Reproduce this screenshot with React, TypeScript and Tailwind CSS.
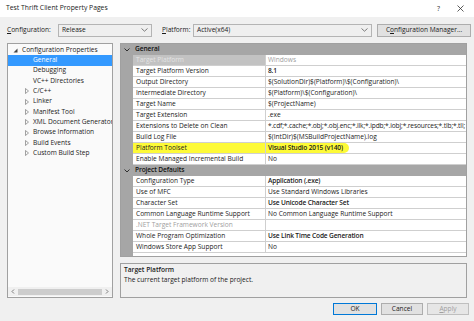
import React from "react";

type Row = {
  name: string;
  value?: string;
  bold?: boolean;
  disabled?: boolean;
  greyName?: boolean;
  highlight?: boolean;
  tight?: boolean;
};

type Section = { title: string; rows: Row[] };

const sections: Section[] = [
  {
    title: "General",
    rows: [
      { name: "Target Platform", value: "Windows", disabled: true, greyName: true },
      { name: "Target Platform Version", value: "8.1", bold: true },
      { name: "Output Directory", value: "$(SolutionDir)$(Platform)\\$(Configuration)\\" },
      { name: "Intermediate Directory", value: "$(Platform)\\$(Configuration)\\" },
      { name: "Target Name", value: "$(ProjectName)" },
      { name: "Target Extension", value: ".exe" },
      {
        name: "Extensions to Delete on Clean",
        value: "*.cdf;*.cache;*.obj;*.obj.enc;*.ilk;*.ipdb;*.iobj;*.resources;*.tlb;*.tli;",
        tight: true,
      },
      { name: "Build Log File", value: "$(IntDir)$(MSBuildProjectName).log" },
      { name: "Platform Toolset", value: "Visual Studio 2015 (v140)", bold: true, highlight: true },
      { name: "Enable Managed Incremental Build", value: "No" },
    ],
  },
  {
    title: "Project Defaults",
    rows: [
      { name: "Configuration Type", value: "Application (.exe)", bold: true },
      { name: "Use of MFC", value: "Use Standard Windows Libraries" },
      { name: "Character Set", value: "Use Unicode Character Set", bold: true },
      { name: "Common Language Runtime Support", value: "No Common Language Runtime Support" },
      { name: ".NET Target Framework Version", value: "", disabled: true },
      { name: "Whole Program Optimization", value: "Use Link Time Code Generation", bold: true },
      { name: "Windows Store App Support", value: "No" },
    ],
  },
];

const tree = [
  { label: "General", selected: true },
  { label: "Debugging" },
  { label: "VC++ Directories" },
  { label: "C/C++", collapsed: true },
  { label: "Linker", collapsed: true },
  { label: "Manifest Tool", collapsed: true },
  { label: "XML Document Generator", collapsed: true },
  { label: "Browse Information", collapsed: true },
  { label: "Build Events", collapsed: true },
  { label: "Custom Build Step", collapsed: true },
];

function Chevron() {
  return (
    <svg width="7" height="4" viewBox="0 0 7 4" className="shrink-0">
      <path d="M0.5 0.5 L3.5 3.2 L6.5 0.5" fill="none" stroke="#6d6d6d" strokeWidth="0.9" />
    </svg>
  );
}

function Combo({ text, className }: { text: string; className: string }) {
  return (
    <div className={`h-[13px] border border-[#b4b4b4] bg-[#efefef] flex items-center pl-[3px] pr-[3px] ${className}`}>
      <span className="flex-1">{text}</span>
      <Chevron />
    </div>
  );
}

export default function App() {
  return (
    <div className="w-[474px] h-[321px] bg-[#f0f0f0] flex flex-col overflow-hidden text-[6.6px] leading-none text-[#1a1a1a] font-['Open_Sans',sans-serif]">
      {/* title bar */}
      <div className="h-[17px] bg-white flex items-center pl-[6px] shrink-0">
        <span className="text-[6.8px]">Test Thrift Client Property Pages</span>
        <span className="ml-auto mr-[17px] text-[7px] text-[#333]">?</span>
        <svg width="7" height="7" viewBox="0 0 7 7" className="mr-[10px]">
          <path d="M0.5 0.5 L6.5 6.5 M6.5 0.5 L0.5 6.5" stroke="#333" strokeWidth="0.8" />
        </svg>
      </div>

      {/* config bar */}
      <div className="h-[26px] flex items-center pl-[7px] shrink-0">
        <span className="w-[51px]">
          <span className="underline">C</span>onfiguration:
        </span>
        <Combo text="Release" className="w-[94px]" />
        <span className="ml-[10px] w-[31px]">
          <span className="underline">P</span>latform:
        </span>
        <Combo text="Active(x64)" className="w-[179px]" />
        <div className="ml-[5px] w-[94px] h-[13px] border border-[#adadad] bg-[#e1e1e1] flex items-center justify-center">
          C<span className="underline">o</span>nfiguration Manager...
        </div>
      </div>

      {/* main area */}
      <div className="h-[255px] flex gap-[7px] px-[7px] shrink-0">
        {/* tree */}
        <div className="w-[106px] border border-[#a0a0a0] bg-[#fafafa] flex flex-col">
          <div className="flex-1 pt-[1px]">
            <div className="h-[10.3px] flex items-center pl-[5px]">
              <svg width="5" height="5" viewBox="0 0 5 5" className="mr-[4px]">
                <path d="M4.5 0.5 L4.5 4.5 L0.5 4.5 Z" fill="#444" />
              </svg>
              <span>Configuration Properties</span>
            </div>
            {tree.map((t) => (
              <div
                key={t.label}
                className={`h-[10.3px] flex items-center whitespace-nowrap overflow-hidden ${
                  t.selected ? "bg-[#3399ff] text-white" : ""
                }`}
              >
                <span className="w-[25px] shrink-0 flex justify-end pr-[4px]">
                  {t.collapsed && (
                    <svg width="4" height="6" viewBox="0 0 4 6">
                      <path d="M0.5 0.5 L3.5 3 L0.5 5.5 Z" fill="none" stroke="#7a7a7a" strokeWidth="0.7" />
                    </svg>
                  )}
                </span>
                <span>{t.label}</span>
              </div>
            ))}
          </div>
          {/* horizontal scrollbar */}
          <div className="h-[9px] mb-[1px] flex items-center px-[3px] gap-[3px] bg-[#f0f0f0]">
            <svg width="4" height="5" viewBox="0 0 4 5">
              <path d="M3 0.5 L1 2.5 L3 4.5" fill="none" stroke="#606060" strokeWidth="0.8" />
            </svg>
            <div className="flex-1 h-[6px] bg-[#cdcdcd]" />
            <svg width="4" height="5" viewBox="0 0 4 5">
              <path d="M1 0.5 L3 2.5 L1 4.5" fill="none" stroke="#606060" strokeWidth="0.8" />
            </svg>
          </div>
        </div>

        {/* right column */}
        <div className="w-[347px] flex flex-col gap-[6px]">
          {/* property grid */}
          <div className="h-[214px] border border-[#a0a0a0] bg-white flex flex-col overflow-hidden">
            {sections.map((s) => (
              <div key={s.title} className="flex flex-col">
                <div className="h-[11px] bg-[#a6a6a6] flex items-center shrink-0">
                  <span className="w-[12px] flex justify-center">
                    <svg width="6" height="4" viewBox="0 0 6 4">
                      <path d="M0.5 0.5 L3 3 L5.5 0.5" fill="none" stroke="#222" strokeWidth="0.9" />
                    </svg>
                  </span>
                  <span className="font-semibold tracking-[-0.1px] pl-[2px] text-[#111]">{s.title}</span>
                </div>
                {s.rows.map((r) => (
                  <div key={r.name} className="h-[11px] flex shrink-0">
                    <div className="w-[12px] bg-[#a6a6a6] shrink-0" />
                    <div
                      className={`w-[133px] shrink-0 flex items-center pl-[3px] border-b border-r border-[#cfcfcf] whitespace-nowrap overflow-hidden ${
                        r.highlight
                          ? "bg-[#fdfa38]"
                          : r.greyName
                          ? "bg-[#c2c2c2] text-[#e4e4e4]"
                          : r.disabled
                          ? "text-[#a0a0a0]"
                          : ""
                      }`}
                    >
                      {r.name}
                    </div>
                    <div className="flex-1 flex items-center border-b border-[#cfcfcf] whitespace-nowrap overflow-hidden">
                      <span
                        className={`h-full flex items-center pl-[2px] ${
                          r.bold ? "font-semibold tracking-[-0.15px]" : ""
                        } ${r.tight ? "tracking-[-0.12px]" : ""} ${r.disabled ? "text-[#a0a0a0]" : ""} ${
                          r.highlight ? "bg-[#fdfa38] pr-[6px] rounded-r-[5px]" : ""
                        }`}
                      >
                        {r.value}
                      </span>
                    </div>
                  </div>
                ))}
              </div>
            ))}
            <div className="flex-1 flex">
              <div className="w-[12px] bg-[#a6a6a6]" />
            </div>
          </div>

          {/* description */}
          <div className="h-[35px] border border-[#a0a0a0] bg-[#f0f0f0] pl-[3px] pt-[3px] flex flex-col gap-[3px]">
            <span className="font-semibold">Target Platform</span>
            <span>The current target platform of the project.</span>
          </div>
        </div>
      </div>

      {/* buttons */}
      <div className="flex justify-end gap-[4px] pr-[5px] mt-[5px]">
        <div className="w-[44px] h-[12px] border border-[#0078d7] bg-[#e1e1e1] flex items-center justify-center">
          OK
        </div>
        <div className="w-[42px] h-[12px] border border-[#adadad] bg-[#e1e1e1] flex items-center justify-center">
          Cancel
        </div>
        <div className="w-[42px] h-[12px] border border-[#bfbfbf] bg-[#e6e6e6] text-[#a0a0a0] flex items-center justify-center">
          <span>
            <span className="underline">A</span>pply
          </span>
        </div>
      </div>
    </div>
  );
}
